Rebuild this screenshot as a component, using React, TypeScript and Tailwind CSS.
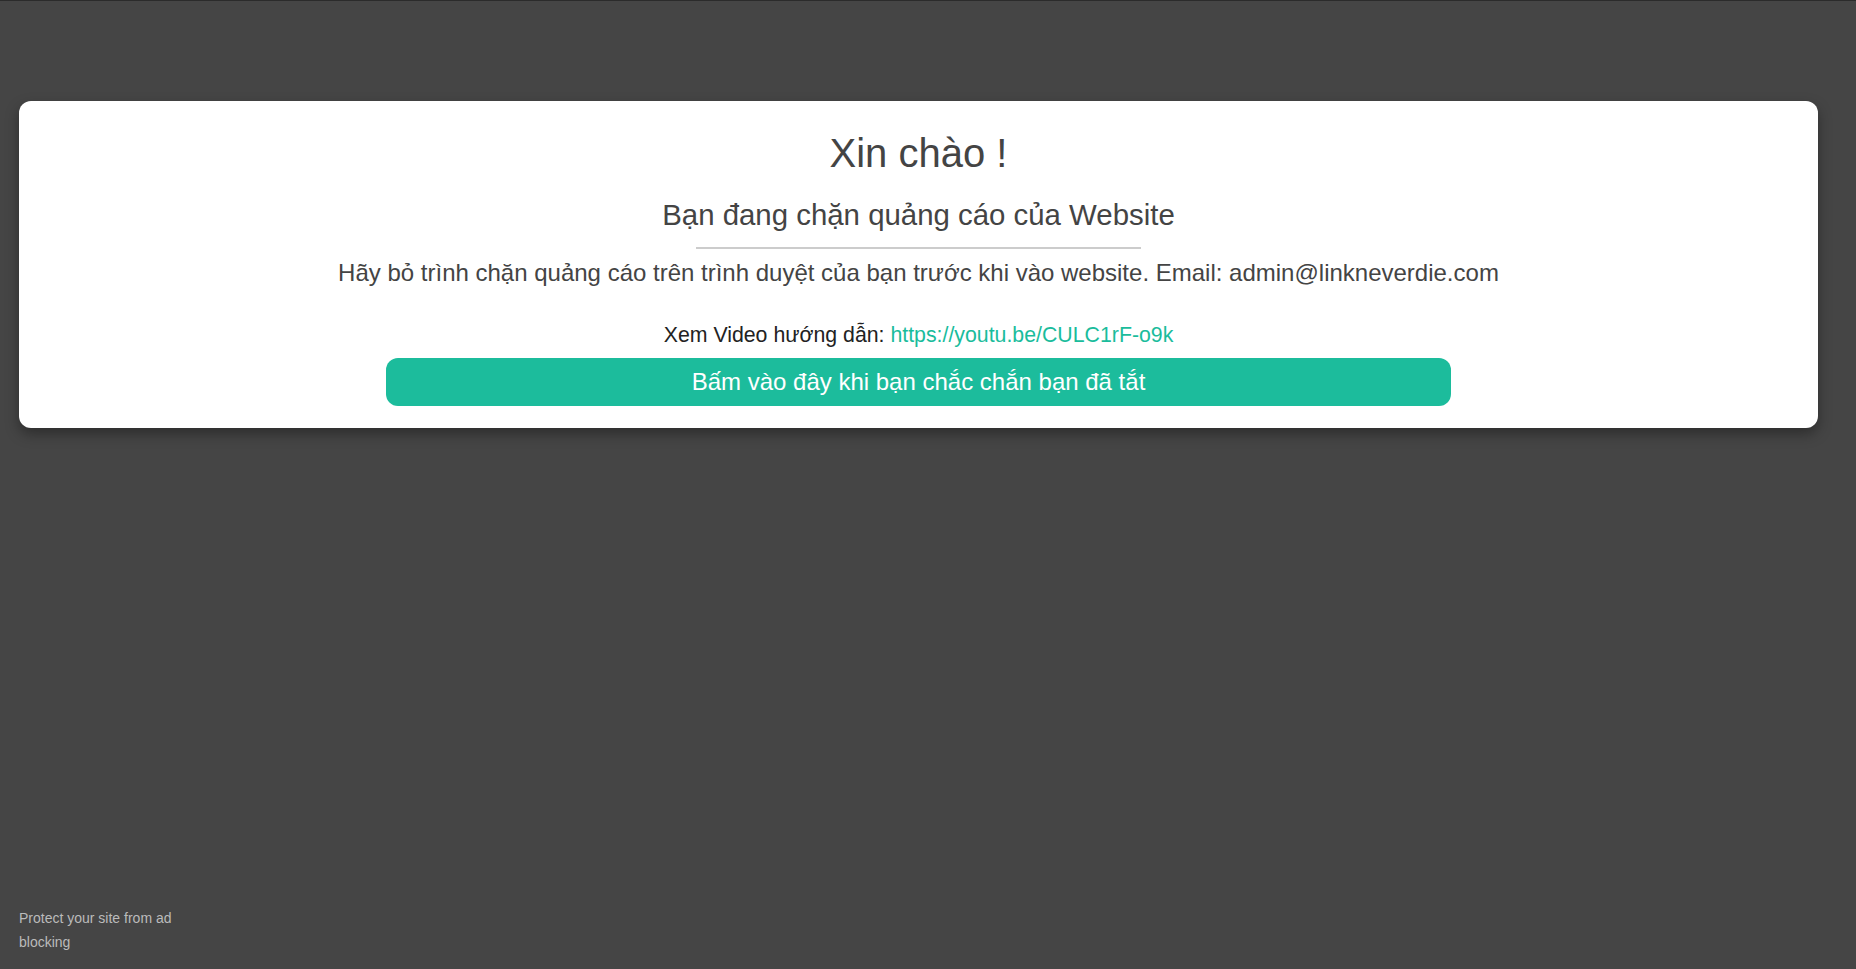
import React from "react";

export default function App() {
  return (
    <div
      className="min-h-[969px] h-[969px] bg-[#454545] border-t border-[#2b2b2b] flex flex-col overflow-hidden"
      style={{ fontFamily: '"Liberation Sans", Arial, sans-serif' }}
    >
      <div className="pt-[100px] pl-[19px]">
        <div className="w-[1799px] bg-white rounded-[12px] shadow-[0_6px_14px_rgba(0,0,0,0.35)] pt-[29px] pb-[22px] flex flex-col items-center">
          <h1 className="text-[40px] leading-[46px] text-[#444444] font-normal">Xin chào !</h1>
          <h2 className="mt-[22px] text-[29.4px] leading-[34px] text-[#444444] font-normal">
            Bạn đang chặn quảng cáo của Website
          </h2>
          <div className="mt-[15px] w-[445px] h-[2px] bg-[#cccccc]" />
          <p className="mt-[10px] text-[24px] leading-[28px] text-[#444444]">
            Hãy bỏ trình chặn quảng cáo trên trình duyệt của bạn trước khi vào website. Email: admin@linkneverdie.com
          </p>
          <p className="mt-[36px] text-[21.3px] leading-[24px] text-[#222222]">
            Xem Video hướng dẫn: <span className="text-[#1abc9c]">https://youtu.be/CULC1rF-o9k</span>
          </p>
          <button className="mt-[11px] w-[1065px] h-[48px] rounded-[12px] bg-[#1cbc9c] text-white text-[24px] leading-[28px] flex items-center justify-center">
            Bấm vào đây khi bạn chắc chắn bạn đã tắt
          </button>
        </div>
      </div>
      <div className="mt-auto pb-[15px] pl-[19px]">
        <div className="w-[180px] text-[14px] leading-[24px] text-[#bbbbbb]">
          Protect your site from ad blocking
        </div>
      </div>
    </div>
  );
}
